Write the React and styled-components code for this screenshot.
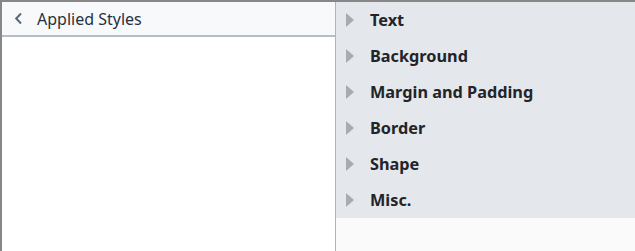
import React from 'react';
import styled, { createGlobalStyle } from 'styled-components';

const GlobalStyle = createGlobalStyle`
  html, body {
    margin: 0;
    padding: 0;
    background: #ffffff;
  }
  body {
    font-family: "Noto Sans", "Open Sans", sans-serif;
  }
`;

const sections = ['Text', 'Background', 'Margin and Padding', 'Border', 'Shape', 'Misc.'];

const App = () => {
  return (
    <>
      <GlobalStyle />
      <Frame>
        <LeftPanel>
          <Header>
            <BackButton>
              <svg width="9" height="13" viewBox="0 0 9 13">
                <path d="M7 1.5 L2.2 6.5 L7 11.5" fill="none" stroke="#5b6878" strokeWidth="2" />
              </svg>
            </BackButton>
            <HeaderTitle>Applied Styles</HeaderTitle>
          </Header>
        </LeftPanel>
        <RightPanel>
          <SectionList>
            {sections.map((name) => (
              <SectionRow key={name}>
                <Caret>
                  <svg width="8" height="14" viewBox="0 0 8 14">
                    <path d="M0 0 L8 7 L0 14 Z" fill="#a9abad" />
                  </svg>
                </Caret>
                <SectionTitle>{name}</SectionTitle>
              </SectionRow>
            ))}
          </SectionList>
        </RightPanel>
      </Frame>
    </>
  );
};

const Frame = styled.div`
  display: flex;
  width: 635px;
  height: 251px;
  box-sizing: border-box;
  border-top: 2px solid #878787;
  border-left: 2px solid #878787;
  overflow: hidden;
`;

const LeftPanel = styled.div`
  width: 333px;
  flex-shrink: 0;
  background: #ffffff;
  border-right: 1px solid #b4b4b4;
`;

const Header = styled.div`
  height: 33px;
  display: flex;
  align-items: center;
  background: #f8f9fa;
  border-bottom: 2px solid #b9bdc2;
`;

const BackButton = styled.div`
  width: 35px;
  padding-left: 12px;
  box-sizing: border-box;
  display: flex;
  align-items: center;
`;

const HeaderTitle = styled.div`
  font-size: 16px;
  color: #26313f;
`;

const RightPanel = styled.div`
  flex: 1;
  background: #fafafa;
`;

const SectionList = styled.div`
  background: #e4e7ec;
  display: flex;
  flex-direction: column;
`;

const SectionRow = styled.div`
  height: 36px;
  display: flex;
  align-items: center;
`;

const Caret = styled.div`
  width: 34px;
  padding-left: 10px;
  box-sizing: border-box;
  display: flex;
  align-items: center;
`;

const SectionTitle = styled.div`
  font-size: 16.3px;
  font-weight: 700;
  color: #222428;
`;

export default App;
